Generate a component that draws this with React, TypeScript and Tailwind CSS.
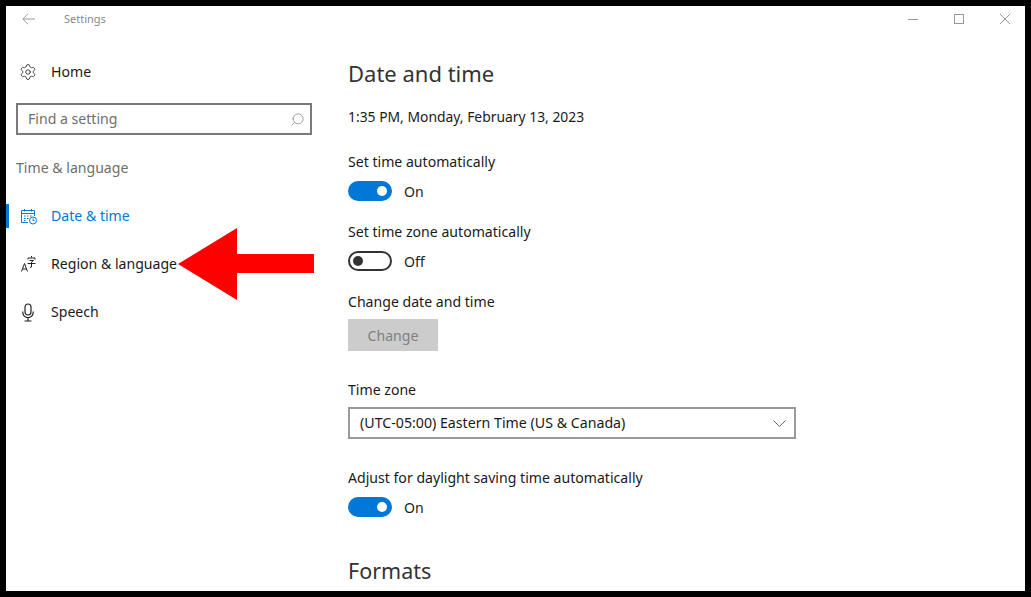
import { Search, Settings } from 'lucide-react';

const Toggle = ({ on }: { on: boolean }) => (
  <div className="mt-[9px] flex h-[20px] items-center">
    {on ? (
      <div className="flex h-[20px] w-[44px] items-center justify-end rounded-full bg-[#0078d7] pr-[5px]">
        <div className="h-[10px] w-[10px] rounded-full bg-white" />
      </div>
    ) : (
      <div className="flex h-[20px] w-[44px] items-center rounded-full border-2 border-[#333333] pl-[3px]">
        <div className="h-[10px] w-[10px] rounded-full bg-[#333333]" />
      </div>
    )}
    <span className="ml-[12px] pt-[1px] text-[#222222]">{on ? 'On' : 'Off'}</span>
  </div>
);

const CalendarClock = () => (
  <svg width="16" height="17" viewBox="0 0 16 17" fill="none" stroke="#0078d7" strokeWidth="1">
    <path d="M7 14.500H.5V2.500H13.500V8" />
    <path d="M.5 5.500H13.500M3.500 1v2.500M10.500 1v2.500M3 8h1.500M6 8h1.500M9 8h1.500M3 10.500h1.500M6 10.500h1.500M3 12.500h1.500" />
    <circle cx="12" cy="12.500" r="3.500" />
    <path d="M12 10.500v2h1.500" />
  </svg>
);

const LanguageIcon = () => (
  <svg width="15" height="16" viewBox="0 0 15 16" fill="none" stroke="#222222" strokeWidth="1">
    <path d="M.5 15.500L3.500 7.500L6.500 15.500M1.500 13h4" />
    <path d="M10.500 0v1.500M7 3.500V2H14V3.500M8.500 4.500h4L10.500 6v5l-1.500.5M6.500 7.500H14.500" />
  </svg>
);

const MicIcon = () => (
  <svg width="12" height="19" viewBox="0 0 12 19" fill="none" stroke="#222222" strokeWidth="1.200">
    <rect x="3" y="1" width="6" height="11" rx="3" />
    <path d="M.8 8.500v1a5.200 5.200 0 0 0 10.400 0v-1M6 15v3M2.500 18h7" />
  </svg>
);

export default function App() {
  return (
    <div className="relative h-[597px] w-[1031px] overflow-hidden bg-black p-[6px] font-['Noto_Sans','Open_Sans',sans-serif] text-[14.100px] text-[#1a1a1a]">
      <div className="flex h-[585px] w-[1019px] flex-col overflow-hidden bg-white">
        {/* title bar */}
        <div className="flex h-[26px] shrink-0 items-center">
          <svg className="ml-[16px]" width="13" height="12" viewBox="0 0 13 12" fill="none" stroke="#999999" strokeWidth="1">
            <path d="M13 6H1M6 .8L.8 6L6 11.200" />
          </svg>
          <span className="ml-[29px] text-[11px] text-[#8a8a8a]">Settings</span>
          <div className="ml-auto flex items-center pr-[15px]">
            <svg width="10" height="10" viewBox="0 0 10 10" stroke="#999999" strokeWidth="1">
              <path d="M0 5.500H10" />
            </svg>
            <svg className="ml-[36px]" width="10" height="10" viewBox="0 0 10 10" fill="none" stroke="#999999" strokeWidth="1">
              <rect x=".5" y=".5" width="9" height="9" />
            </svg>
            <svg className="ml-[36px]" width="10" height="10" viewBox="0 0 10 10" stroke="#999999" strokeWidth="1">
              <path d="M0 0L10 10M10 0L0 10" />
            </svg>
          </div>
        </div>

        <div className="flex min-h-0 flex-1">
          {/* sidebar */}
          <div className="w-[342px] shrink-0">
            <div className="mt-[30px] flex h-[20px] items-center pl-[13px]">
              <Settings className="h-[18px] w-[18px] text-[#222222]" strokeWidth={1.100} />
              <span className="ml-[14px]">Home</span>
            </div>
            <div className="mt-[21px] ml-[10px] flex h-[32px] w-[296px] items-center justify-between border-2 border-[#7a7a7a] pr-[5px] pl-[10px] text-[#6e6e6e]">
              <span>Find a setting</span>
              <Search className="h-[15px] w-[15px] -scale-x-100 text-[#777777]" strokeWidth={1.100} />
            </div>
            <div className="mt-[23px] ml-[10px] leading-[20px] text-[#6e6e6e]">Time &amp; language</div>
            <div className="mt-[26px] flex h-[24px] items-center border-l-[3px] border-[#0078d7] pl-[12px] text-[#0078d7]">
              <CalendarClock />
              <span className="ml-[14px]">Date &amp; time</span>
            </div>
            <div className="mt-[24px] flex h-[24px] items-center pl-[15px]">
              <LanguageIcon />
              <span className="ml-[15px]">Region &amp; language</span>
            </div>
            <div className="mt-[24px] flex h-[24px] items-center pl-[16px]">
              <MicIcon />
              <span className="ml-[17px]">Speech</span>
            </div>
          </div>

          {/* content */}
          <div className="flex-1">
            <h1 className="mt-[25px] text-[22px] leading-[32px] font-normal text-[#333333]">Date and time</h1>
            <div className="mt-[18px] text-[13.880px] leading-[20px]">1:35 PM, Monday, February 13, 2023</div>
            <div className="mt-[25px] leading-[20px]">Set time automatically</div>
            <Toggle on />
            <div className="mt-[21px] leading-[20px]">Set time zone automatically</div>
            <Toggle on={false} />
            <div className="mt-[21px] leading-[20px]">Change date and time</div>
            <div className="mt-[7px] flex h-[32px] w-[90px] items-center justify-center bg-[#cccccc] pt-[1px] text-[#808080]">Change</div>
            <div className="mt-[29px] leading-[20px]">Time zone</div>
            <div className="mt-[7px] flex h-[32px] w-[448px] items-center justify-between border-2 border-[#999999] pr-[8px] pl-[10px]">
              <span className="text-[14.200px]">(UTC-05:00) Eastern Time (US &amp; Canada)</span>
              <svg width="13" height="7" viewBox="0 0 13 7" fill="none" stroke="#666666" strokeWidth="1">
                <path d="M.5 .5L6.500 6.500L12.500 .5" />
              </svg>
            </div>
            <div className="mt-[29px] leading-[20px]">Adjust for daylight saving time automatically</div>
            <Toggle on />
            <h2 className="mt-[38px] text-[21.500px] leading-[32px] font-normal text-[#333333]">Formats</h2>
          </div>
        </div>
      </div>

      {/* red annotation arrow */}
      <svg className="absolute top-[228px] left-[178px]" width="136" height="72" viewBox="0 0 136 72">
        <path d="M0 36L59 0V26H136V45H59V72Z" fill="#ff0000" />
      </svg>
    </div>
  );
}
